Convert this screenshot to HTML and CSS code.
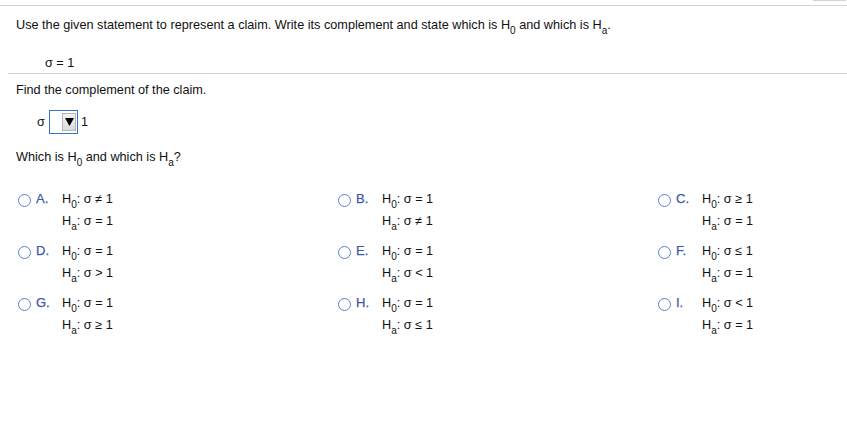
FILE: index.html
```html
<!DOCTYPE html>
<html>
<head>
<meta charset="utf-8">
<link rel="stylesheet" href="styles.css">
</head>
<body>
<div class="corner"></div>
<div class="topline"></div>
<div class="question">
  <p class="intro">Use the given statement to represent a claim. Write its complement and state which is H<sub>0</sub> and which is H<sub>a</sub>.</p>
  <p class="claim">σ = 1</p>
</div>
<div class="sep"></div>
<div class="answer">
  <p class="find">Find the complement of the claim.</p>
  <div class="selrow">
    <span class="sig">σ</span>
    <span class="select"><span class="btn"><svg width="9" height="8" viewBox="0 0 9 8"><path d="M0 0H9L4.5 8Z" fill="#000"/></svg></span></span>
    <span class="one">1</span>
  </div>
  <p class="which">Which is H<sub>0</sub> and which is H<sub>a</sub>?</p>
  <div class="opts">
    <div class="opt"><span class="radio"></span><span class="let">A.</span><div class="hyp"><div>H<sub>0</sub>: σ ≠ 1</div><div>H<sub>a</sub>: σ = 1</div></div></div>
    <div class="opt"><span class="radio"></span><span class="let">B.</span><div class="hyp"><div>H<sub>0</sub>: σ = 1</div><div>H<sub>a</sub>: σ ≠ 1</div></div></div>
    <div class="opt"><span class="radio"></span><span class="let">C.</span><div class="hyp"><div>H<sub>0</sub>: σ ≥ 1</div><div>H<sub>a</sub>: σ = 1</div></div></div>
    <div class="opt"><span class="radio"></span><span class="let">D.</span><div class="hyp"><div>H<sub>0</sub>: σ = 1</div><div>H<sub>a</sub>: σ &gt; 1</div></div></div>
    <div class="opt"><span class="radio"></span><span class="let">E.</span><div class="hyp"><div>H<sub>0</sub>: σ = 1</div><div>H<sub>a</sub>: σ &lt; 1</div></div></div>
    <div class="opt"><span class="radio"></span><span class="let">F.</span><div class="hyp"><div>H<sub>0</sub>: σ ≤ 1</div><div>H<sub>a</sub>: σ = 1</div></div></div>
    <div class="opt"><span class="radio"></span><span class="let">G.</span><div class="hyp"><div>H<sub>0</sub>: σ = 1</div><div>H<sub>a</sub>: σ ≥ 1</div></div></div>
    <div class="opt"><span class="radio"></span><span class="let">H.</span><div class="hyp"><div>H<sub>0</sub>: σ = 1</div><div>H<sub>a</sub>: σ ≤ 1</div></div></div>
    <div class="opt"><span class="radio"></span><span class="let">I.</span><div class="hyp"><div>H<sub>0</sub>: σ &lt; 1</div><div>H<sub>a</sub>: σ = 1</div></div></div>
  </div>
</div>
</body>
</html>
```
FILE: styles.css
```css
html, body { margin: 0; padding: 0; background: #fff; }
body {
  font-family: "Liberation Sans", Arial, sans-serif;
  font-size: 12.7px;
  color: #111;
  position: relative;
  width: 847px;
  height: 438px;
  overflow: hidden;
}
p { margin: 0; }
sub { font-size: 10px; vertical-align: -5px; line-height: 0; }
.corner {
  position: absolute;
  right: 1px; top: 0;
  width: 33px; height: 1px;
  background: #d4d4d4;
}
.topline { height: 5px; border-bottom: 1px solid #d3d3dc; }
.question { padding: 11px 0 0 16px; height: 67px; box-sizing: border-box; }
.intro { line-height: 16px; }
.claim { padding: 22px 0 0 29px; line-height: 16px; }
.sep { margin-left: 8px; border-top: 1px solid #d3d3dc; }
.answer { padding: 8px 0 0 16px; }
.find { line-height: 16px; }
.selrow { display: flex; align-items: center; margin-top: 12px; height: 24px; }
.sig { margin-left: 21px; width: 12px; }
.select {
  width: 26px; height: 22px;
  border: 1px solid #3a6fcf;
  display: flex; justify-content: flex-end; align-items: center;
  padding-right: 1px;
}
.btn {
  width: 12px; height: 16px;
  background: linear-gradient(#f2f2f2, #dcdcdc);
  border: 1px solid #b4b4b4;
  display: flex; align-items: center; justify-content: center;
}
.one { margin-left: 3px; }
.which { margin-top: 15px; line-height: 16px; }
.opts {
  display: grid;
  grid-template-columns: 320px 320px 190px;
  row-gap: 8px;
  margin-top: 26px;
  padding-left: 2px;
}
.opt { display: flex; align-items: flex-start; }
.radio {
  width: 11px; height: 11px;
  border: 1px solid #5b7fd1;
  border-radius: 50%;
  margin-top: 3px;
  flex: none;
}
.let { color: #3d58a8; margin-left: 5px; width: 26px; font-size: 13px; line-height: 16px; -webkit-text-stroke: 0.25px #3d58a8; }
.hyp { line-height: 16px; }
.hyp div { height: 22px; }
```
